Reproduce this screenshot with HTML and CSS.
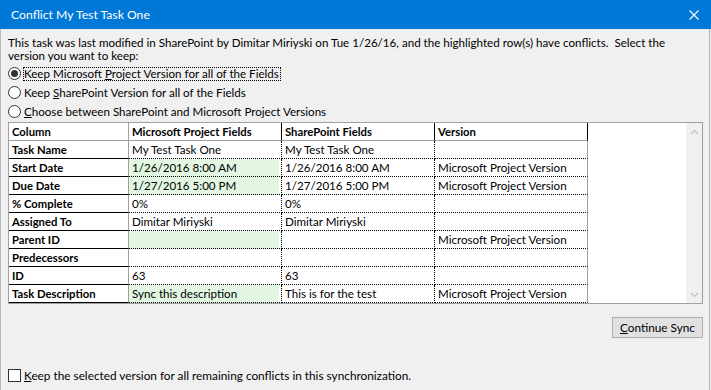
FILE: index.html
```html
<!DOCTYPE html>
<html lang="en">
<head>
<meta charset="utf-8">
<title>Conflict My Test Task One</title>
<link rel="stylesheet" href="styles.css">
</head>
<body>
<div class="window">
  <header class="titlebar">
    <span class="title">Conflict My Test Task One</span>
    <svg class="close" width="10" height="10" viewBox="0 0 10 10" aria-label="Close"><path d="M0.5 0.5L9.5 9.5M9.5 0.5L0.5 9.5" stroke="#fff" stroke-width="1.1" fill="none"/></svg>
  </header>
  <main class="content">
    <p class="intro"><span class="line">This task was last modified in SharePoint by Dimitar Miriyski on Tue 1/26/16, and the highlighted row(s) have conflicts.&nbsp; Select the</span><span class="line">version you want to keep:</span></p>
    <div class="options">
      <label class="option"><span class="radio checked"></span><span class="opt-text focused">Keep Microsoft <u>P</u>roject Version for all of the Fields</span></label>
      <label class="option"><span class="radio"></span><span class="opt-text">Keep <u>S</u>harePoint Version for all of the Fields</span></label>
      <label class="option"><span class="radio"></span><span class="opt-text"><u>C</u>hoose between SharePoint and Microsoft Project Versions</span></label>
    </div>
    <div class="gridframe">
      <div class="grid">
        <div class="cell hd first">Column</div>
        <div class="cell hd">Microsoft Project Fields</div>
        <div class="cell hd">SharePoint Fields</div>
        <div class="cell hd last">Version</div>

        <div class="cell first">Task Name</div>
        <div class="cell">My Test Task One</div>
        <div class="cell">My Test Task One</div>
        <div class="cell last"></div>

        <div class="cell first">Start Date</div>
        <div class="cell hl">1/26/2016 8:00 AM</div>
        <div class="cell">1/26/2016 8:00 AM</div>
        <div class="cell last">Microsoft Project Version</div>

        <div class="cell first">Due Date</div>
        <div class="cell hl">1/27/2016 5:00 PM</div>
        <div class="cell">1/27/2016 5:00 PM</div>
        <div class="cell last">Microsoft Project Version</div>

        <div class="cell first">% Complete</div>
        <div class="cell">0%</div>
        <div class="cell">0%</div>
        <div class="cell last"></div>

        <div class="cell first">Assigned To</div>
        <div class="cell">Dimitar Miriyski</div>
        <div class="cell">Dimitar Miriyski</div>
        <div class="cell last"></div>

        <div class="cell first">Parent ID</div>
        <div class="cell hl"></div>
        <div class="cell"></div>
        <div class="cell last">Microsoft Project Version</div>

        <div class="cell first">Predecessors</div>
        <div class="cell"></div>
        <div class="cell"></div>
        <div class="cell last"></div>

        <div class="cell first">ID</div>
        <div class="cell">63</div>
        <div class="cell">63</div>
        <div class="cell last"></div>

        <div class="cell first">Task Description</div>
        <div class="cell hl">Sync this description</div>
        <div class="cell">This is for the test</div>
        <div class="cell last">Microsoft Project Version</div>
      </div>
      <div class="blank"></div>
      <div class="scrollbar">
        <svg width="9" height="6" viewBox="0 0 9 6"><path d="M1 5L4.5 1.5L8 5" stroke="#c4c4c4" stroke-width="1.4" fill="none"/></svg>
        <svg width="9" height="6" viewBox="0 0 9 6"><path d="M1 1L4.5 4.5L8 1" stroke="#c4c4c4" stroke-width="1.4" fill="none"/></svg>
      </div>
    </div>
    <div class="actions">
      <button class="btn" type="button"><u>C</u>ontinue Sync</button>
    </div>
    <label class="keep"><span class="checkbox"></span><span class="keep-text"><u>K</u>eep the selected version for all remaining conflicts in this synchronization.</span></label>
  </main>
</div>
</body>
</html>
```
FILE: styles.css
```css
* { box-sizing: border-box; }

html, body {
  margin: 0;
  padding: 0;
}

body {
  width: 711px;
  height: 390px;
  overflow: hidden;
  background: #f0f0f0;
  font-family: Lato, "Noto Sans", sans-serif;
  font-size: 11.6px;
  color: #000;
}

.window {
  width: 711px;
  height: 390px;
  display: flex;
  flex-direction: column;
}

.titlebar {
  height: 29px;
  flex: none;
  background: #0078d7;
  color: #fff;
  display: flex;
  align-items: center;
  justify-content: space-between;
  padding: 0 12px 0 11px;
}

.title {
  font-size: 12.2px;
  line-height: 14px;
}

.close { display: block; }

.content {
  flex: 1;
  display: flex;
  flex-direction: column;
  padding: 7px 8px 0 8px;
  box-shadow: inset 1px 0 0 #b9b9b9, inset -1px 0 0 #f0f0f0, inset -2px 0 0 #b4b4b4;
}

.intro {
  margin: 0;
  white-space: nowrap;
}

.intro .line {
  display: block;
  height: 13px;
  line-height: 13px;
}

.options {
  margin-top: 2px;
  display: flex;
  flex-direction: column;
}

.option {
  height: 19px;
  display: flex;
  align-items: center;
}

.radio {
  width: 13px;
  height: 13px;
  border-radius: 50%;
  border: 1px solid #333;
  background: #fff;
  display: flex;
  align-items: center;
  justify-content: center;
  flex: none;
}

.radio.checked::after {
  content: "";
  width: 7px;
  height: 7px;
  border-radius: 50%;
  background: #333;
}

.opt-text {
  margin-left: 2px;
  padding: 0 1px 0 0;
  line-height: 12px;
  border: 1px solid transparent;
}

.opt-text.focused {
  border: 1px dotted #000;
}

.gridframe {
  margin-top: 1px;
  width: 695px;
  height: 182px;
  border: 1px solid #a0a0a0;
  background: #fff;
  display: flex;
  flex: none;
}

.grid {
  display: grid;
  grid-template-columns: 120px 153px 153px 153px;
  grid-auto-rows: 18px;
  flex: none;
}

.cell {
  padding-left: 3px;
  line-height: 17px;
  white-space: nowrap;
  overflow: hidden;
  border-right: 1px dotted #000;
  border-bottom: 1px dotted #000;
}

.cell.first {
  font-weight: bold;
  font-size: 11.3px;
  border-right: 1px solid #a0a0a0;
  border-bottom: 1px solid #000;
}

.cell.last {
  border-right: 1px solid #a0a0a0;
}

.cell.hd {
  font-weight: bold;
  font-size: 11.3px;
  border-right: 1px solid #000;
  border-bottom: 1px solid #a0a0a0;
}

.cell.hd.first {
  border-right: 1px solid #a0a0a0;
}

.cell.hl {
  background: #e2f6e2;
  box-shadow: inset -2px 0 0 #fff;
}

.blank {
  flex: 1;
}

.scrollbar {
  width: 16px;
  flex: none;
  background: #f0f0f0;
  display: flex;
  flex-direction: column;
  align-items: center;
  justify-content: space-between;
  padding: 6px 0 5px;
}

.scrollbar svg { display: block; }

.actions {
  margin-top: 13px;
  display: flex;
  justify-content: flex-end;
}

.btn {
  width: 91px;
  height: 21px;
  padding: 0;
  border: 1px solid #adadad;
  background: #e1e1e1;
  font-family: inherit;
  font-size: 11.8px;
  color: #000;
  line-height: 19px;
}

.keep {
  margin-top: auto;
  margin-bottom: 8px;
  height: 13px;
  display: flex;
  align-items: center;
}

.checkbox {
  width: 13px;
  height: 13px;
  border: 1px solid #333;
  background: #fff;
  flex: none;
}

.keep-text {
  margin-left: 3px;
  line-height: 13px;
  font-size: 11.8px;
}
```
